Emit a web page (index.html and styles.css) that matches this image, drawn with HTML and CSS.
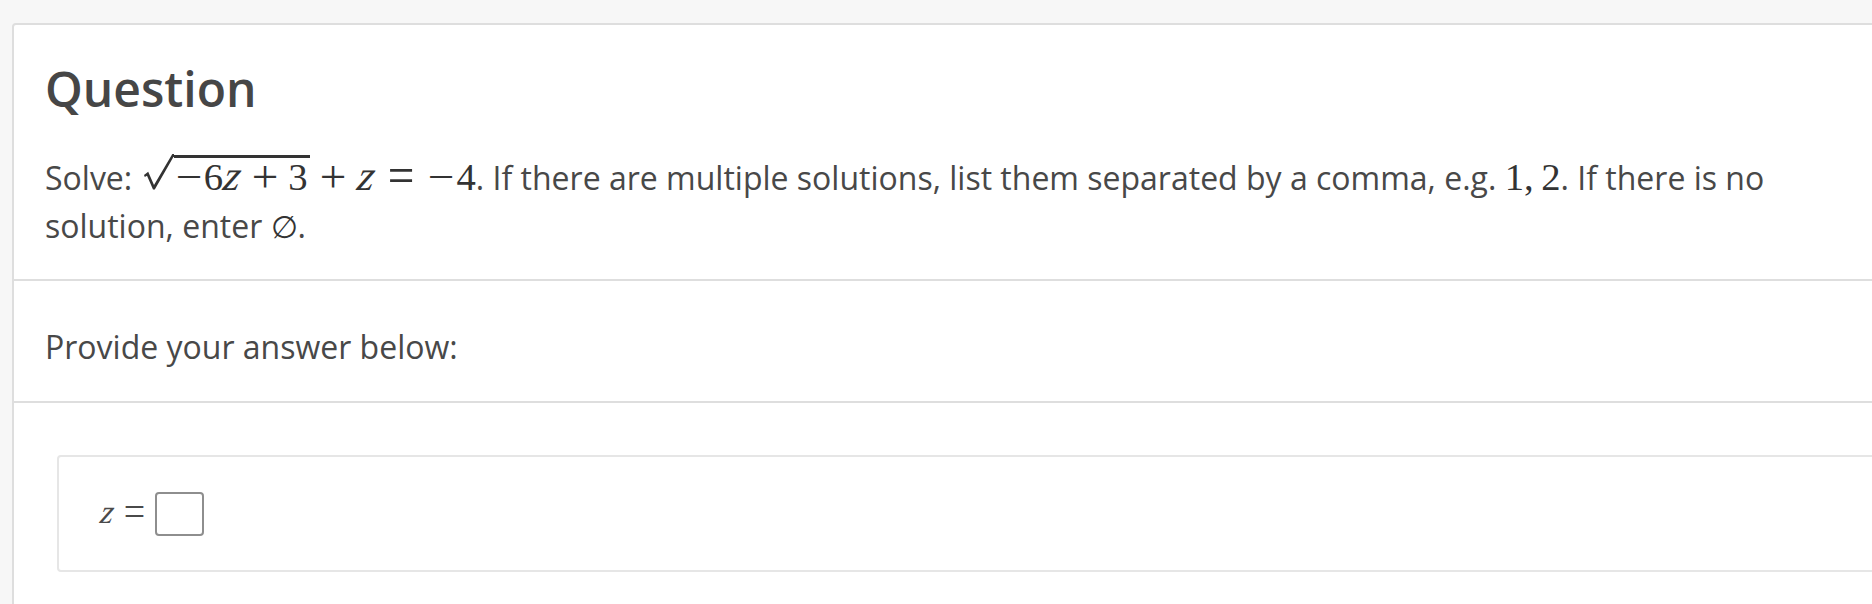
FILE: index.html
```html
<!DOCTYPE html>
<html lang="en">
<head>
<meta charset="utf-8">
<title>Question</title>
<link rel="stylesheet" href="styles.css">
</head>
<body>
<div class="card">
  <section class="section s-question">
    <h1 class="title">Question</h1>
    <p class="prompt">Solve: <span class="math"><span class="sqrt"><svg class="surd" width="33" height="36" viewBox="0 0 33 36"><path d="M3 21 L7.2 17.8 L13 31 L31.3 0 L33 0 L33 3 L32.4 3 L13.8 35.6 L12 35.6 L6 21.8 L3.8 23 Z" fill="#333"/></svg><span class="radicand"><span class="mo">−</span>6<span class="mi">z</span><span class="mbin">+</span>3</span></span><span class="mbin">+</span><span class="mi">z</span><span class="mrel">=</span><span class="mo">−</span>4</span>. If there are multiple solutions, list them separated by a comma, e.g. <span class="math">1<span class="mpunct">,</span>2</span>. If there is no solution, enter <span class="math"><span class="empty">∅</span></span>.</p>
  </section>
  <section class="section s-provide">
    <p class="provide">Provide your answer below:</p>
  </section>
  <section class="section s-answer">
    <div class="answer-box">
      <span class="ans-math"><span class="ans-z">z</span><span class="ans-eq">=</span></span>
      <span class="ans-input"></span>
    </div>
  </section>
</div>
</body>
</html>
```

FILE: styles.css
```css
html, body {
  margin: 0;
  background: #f7f7f7;
  overflow: hidden;
}

body {
  font-family: "Open Sans", "Noto Sans", sans-serif;
  color: #484848;
  padding: 23px 0 0 12px;
  height: 604px;
  box-sizing: border-box;
}

.card {
  width: 1900px;
  background: #ffffff;
  border: 2px solid #dedede;
  border-radius: 4px;
  box-sizing: border-box;
  min-height: 700px;
}

.section {
  padding-left: 31px;
  padding-right: 31px;
}

.section + .section {
  border-top: 2px solid #dedede;
}

.s-question {
  padding-top: 35px;
  padding-bottom: 29px;
}

.title {
  margin: 0;
  font-size: 48px;
  font-weight: 600;
  line-height: 58px;
  color: #464646;
}

.prompt {
  margin: 36px 0 0;
  font-size: 32px;
  line-height: 48px;
}

.s-provide {
  padding-top: 42px;
  padding-bottom: 30px;
}

.provide {
  margin: 0;
  font-size: 32px;
  line-height: 48px;
}

.s-answer {
  padding: 52px 0 40px 43px;
}

.answer-box {
  border: 2px solid #e6e6e6;
  border-radius: 4px;
  padding: 35px 42px 34px;
  display: flex;
  align-items: center;
}

/* math */
.math {
  font-family: "Liberation Serif", "DejaVu Serif", serif;
  font-size: 38.7px;
  line-height: 1;
  color: #333333;
  white-space: nowrap;
}

.sqrt {
  display: inline-flex;
  align-items: baseline;
}

.surd {
  display: block;
  margin-bottom: -1px;
}

.radicand {
  border-top: 3px solid #333333;
  line-height: 1;
  padding-right: 2px;
}

.mo,
.mbin,
.mrel {
  display: inline-block;
  width: 0.778em;
  text-align: center;
  transform-origin: 50% 0.5875em;
}

.mo {
  transform: scaleX(1.22);
}

.mbin {
  margin: 0 0.222em;
  transform: scale(1.22);
}

.mrel {
  margin: 0 0.278em;
  transform: scale(1.22, 1.35);
}

.mi {
  display: inline-block;
  width: 0.465em;
  font-style: italic;
  transform: scale(1.1) skewX(-10deg);
  transform-origin: 40% 0.8em;
}

.mpunct {
  display: inline-block;
  width: 0.278em;
  margin-right: 0.167em;
}

.empty {
  font-family: "DejaVu Serif", serif;
  font-size: 0.8em;
}

.ans-math {
  font-family: "Liberation Serif", "DejaVu Serif", serif;
  font-size: 33px;
  line-height: 1;
  color: #4a4a4a;
  display: inline-flex;
  align-items: baseline;
  margin-bottom: 4px;
}

.ans-z {
  display: inline-block;
  width: 14px;
  font-style: italic;
  transform: skewX(-10deg);
}

.ans-eq {
  display: inline-block;
  width: 23px;
  margin: 0 9px 0 8px;
  text-align: center;
  transform: scale(1.15, 1.3);
  transform-origin: 50% 0.5875em;
}

.ans-input {
  display: block;
  width: 49px;
  height: 44px;
  box-sizing: border-box;
  border: 2px solid #8e8e8e;
  border-radius: 4px;
  background: #ffffff;
}
```
